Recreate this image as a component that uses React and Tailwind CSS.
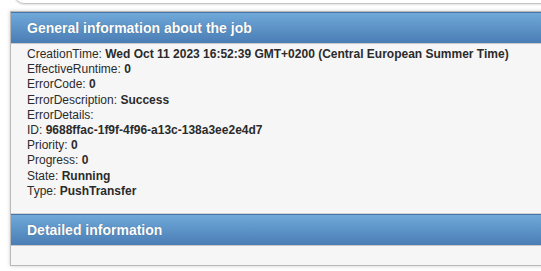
import React from 'react'

const rows = [
  ['CreationTime', 'Wed Oct 11 2023 16:52:39 GMT+0200 (Central European Summer Time)'],
  ['EffectiveRuntime', '0'],
  ['ErrorCode', '0'],
  ['ErrorDescription', 'Success'],
  ['ErrorDetails', ''],
  ['ID', '9688ffac-1f9f-4f96-a13c-138a3ee2e4d7'],
  ['Priority', '0'],
  ['Progress', '0'],
  ['State', 'Running'],
  ['Type', 'PushTransfer'],
]

function Header({ title }) {
  return (
    <div className="h-[31px] flex items-center pl-[16px] border-t border-[#4675a6] bg-gradient-to-b from-[#70a9da] to-[#4a7db4] text-white font-bold text-[14px] [text-shadow:0_0_1px_rgba(0,0,0,0.35)]">
      {title}
    </div>
  )
}

export default function App() {
  return (
    <div className="w-[541px] h-[271px] overflow-hidden bg-white font-['Liberation_Sans',Arial,sans-serif]">
      <div className="ml-[14px] mr-[-20px] mt-[-20px] h-[24px] border border-[#c4c4c4] rounded-[10px] bg-white shadow-[0_1px_2px_rgba(0,0,0,0.12)]"></div>
      <div className="ml-[10px] mr-[-30px] mt-[7px] border border-[#b8b8b8] shadow-[0_0_4px_rgba(0,0,0,0.2)] bg-[#f6f6f6]">
        <Header title="General information about the job" />
        <div className="pl-[16px] pt-[3px] pb-[14px] text-[12px] leading-[15.2px] text-[#2b2b2b] border-t border-[#c9c9c9] border-b border-b-[#d4d4d4]">
          {rows.map(([k, v]) => (
            <div key={k}>
              {k}: <span className="font-bold">{v}</span>
            </div>
          ))}
        </div>
        <Header title="Detailed information" />
        <div className="h-[20px] border-t border-[#c9c9c9]"></div>
      </div>
    </div>
  )
}
